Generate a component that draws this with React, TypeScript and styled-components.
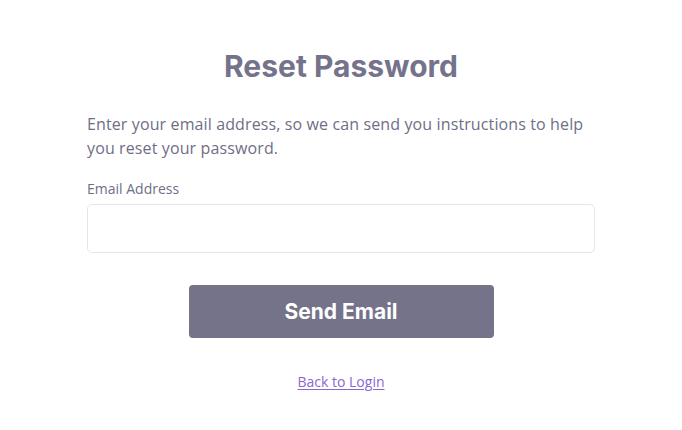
import React from "react";
import styled, { createGlobalStyle } from "styled-components";

const Global = createGlobalStyle`
  html, body { margin: 0; padding: 0; background: #ffffff; }
  body { font-family: "Open Sans", sans-serif; }
`;

const Page = styled.div`
  width: 508px;
  margin: 0 auto;
  padding-top: 48px;
  display: flex;
  flex-direction: column;
`;

const Title = styled.h1`
  margin: 0;
  font-family: "Inter", "Lato", sans-serif;
  font-weight: 700;
  font-size: 30px;
  line-height: 36px;
  color: #74738b;
  text-align: center;
`;

const Intro = styled.p`
  margin: 28px 0 0;
  font-size: 16px;
  line-height: 24px;
  letter-spacing: 0.12px;
  color: #6f6e86;
`;

const Label = styled.label`
  margin-top: 19px;
  font-size: 14px;
  line-height: 20px;
  color: #6f6e86;
`;

const Input = styled.input`
  margin-top: 5px;
  box-sizing: border-box;
  width: 100%;
  height: 49px;
  border: 1px solid #e6e6ea;
  border-radius: 5px;
  background: #ffffff;
  padding: 0 14px;
  font-family: "Open Sans", sans-serif;
  font-size: 15px;
  outline: none;
`;

const Button = styled.button`
  align-self: center;
  margin-top: 32px;
  width: 305px;
  height: 53px;
  border: none;
  border-radius: 4px;
  background: #747389;
  color: #ffffff;
  font-family: "Inter", "Lato", sans-serif;
  font-weight: 700;
  font-size: 21px;
  cursor: pointer;
`;

const BackLink = styled.a`
  align-self: center;
  margin-top: 34px;
  font-size: 14px;
  line-height: 20px;
  color: #8a66d3;
  text-decoration: underline;
  text-underline-offset: 2px;
`;

export default function App() {
  return (
    <>
      <Global />
      <Page>
        <Title>Reset Password</Title>
        <Intro>
          Enter your email address, so we can send you instructions to help you reset your password.
        </Intro>
        <Label htmlFor="email">Email Address</Label>
        <Input id="email" type="email" />
        <Button type="button">Send Email</Button>
        <BackLink href="#">Back to Login</BackLink>
      </Page>
    </>
  );
}
